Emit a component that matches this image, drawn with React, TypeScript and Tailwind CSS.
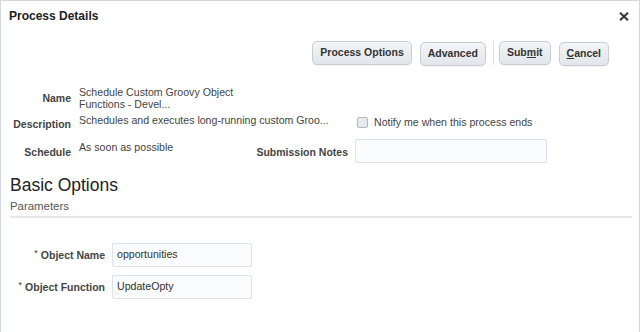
import type { ReactNode } from 'react';

const FONT = { fontFamily: '"Liberation Sans", Arial, sans-serif' };

function Btn({ children }: { children: ReactNode }) {
  return (
    <button
      type="button"
      className="h-[24px] rounded-[5px] border border-[#c5cdd5] bg-gradient-to-b from-[#f3f5f7] to-[#e2e6ea] px-[7px] text-[10.5px] font-bold text-[#333] shadow-[0_1px_1px_rgba(0,0,0,0.05)]"
    >
      {children}
    </button>
  );
}

function FieldInput({ value, width }: { value: string; width: string }) {
  return (
    <div
      className={`${width} flex h-[24px] items-center rounded-[2px] border border-[#dde2e8] bg-[#fafbfc] pl-[4px] text-[10.6px] text-[#333]`}
    >
      {value}
    </div>
  );
}

export default function App() {
  return (
    <div
      style={FONT}
      className="h-[332px] w-[640px] overflow-hidden border-x border-t border-[#d3d9df] bg-white text-[#333]"
    >
      {/* header */}
      <div className="flex h-[29px] items-center justify-between pl-[8px] pr-[10px]">
        <span className="text-[12px] font-bold text-[#222]">Process Details</span>
        <svg width="10" height="9" viewBox="0 0 10 9" className="mt-[1px]">
          <path d="M1 0.8 L9 8.2 M9 0.8 L1 8.2" stroke="#333" strokeWidth="2" />
        </svg>
      </div>

      {/* toolbar */}
      <div className="mt-[10px] flex items-center justify-end pr-[30px]">
        <Btn>Process Options</Btn>
        <div className="ml-[8px]">
          <Btn>Advanced</Btn>
        </div>
        <div className="ml-[7px] mr-[5px] h-[24px] w-px bg-[#dfe3e7]" />
        <Btn>
          Sub<span className="underline">m</span>it
        </Btn>
        <div className="ml-[8px]">
          <Btn>
            <span className="underline">C</span>ancel
          </Btn>
        </div>
      </div>

      {/* summary form */}
      <div className="mt-[20px] text-[10.6px]">
        <div className="flex items-start">
          <div className="mt-[6px] w-[70px] text-right text-[10.5px] font-bold leading-[12px] text-[#444]">Name</div>
          <div className="ml-[8px] leading-[12px] text-[#444]">
            Schedule Custom Groovy Object
            <br />
            Functions - Devel...
          </div>
        </div>

        <div className="mt-[4px] flex items-start">
          <div className="mt-[4px] w-[70px] text-right text-[10.5px] font-bold leading-[12px] text-[#444]">Description</div>
          <div className="ml-[8px] w-[278px] whitespace-nowrap leading-[12px] text-[#444]">
            Schedules and executes long-running custom Groo...
          </div>
          <div className="mt-[3px] h-[11px] w-[11px] rounded-[2px] border border-[#b4b9bf] bg-[#e8ebee]" />
          <div className="ml-[6px] mt-[2px] leading-[12px] text-[#444]">Notify me when this process ends</div>
        </div>

        <div className="mt-[9px] flex items-start">
          <div className="mt-[7px] w-[70px] text-right text-[10.5px] font-bold leading-[12px] text-[#444]">Schedule</div>
          <div className="ml-[8px] mt-[2px] w-[150px] leading-[12px] text-[#444]">As soon as possible</div>
          <div className="mt-[7px] w-[119px] whitespace-nowrap text-right text-[10.5px] font-bold leading-[12px] text-[#444]">
            Submission Notes
          </div>
          <div className="ml-[7px]">
            <FieldInput value="" width="w-[192px]" />
          </div>
        </div>
      </div>

      {/* basic options */}
      <div className="mt-[14px] pl-[9px] pr-[7px]">
        <div className="text-[17.5px] leading-none text-[#222]">Basic Options</div>
        <div className="mt-[6px] pb-[3px] text-[11.4px] leading-[13px] text-[#555]">Parameters</div>
        <div className="h-[2px] bg-[#e6e8ea]" />
      </div>

      <div className="mt-[25px] flex flex-col gap-[8px]">
        {[
          ['Object Name', 'opportunities'],
          ['Object Function', 'UpdateOpty'],
        ].map(([label, value]) => (
          <div key={label} className="flex items-center">
            <div className="w-[104px] text-right text-[10.5px] font-bold leading-[12px] text-[#444]">
              <span className="relative -top-[3px] mr-[3px] text-[9px] font-normal text-[#333]">*</span>
              {label}
            </div>
            <div className="ml-[7px]">
              <FieldInput value={value} width="w-[140px]" />
            </div>
          </div>
        ))}
      </div>
    </div>
  );
}
